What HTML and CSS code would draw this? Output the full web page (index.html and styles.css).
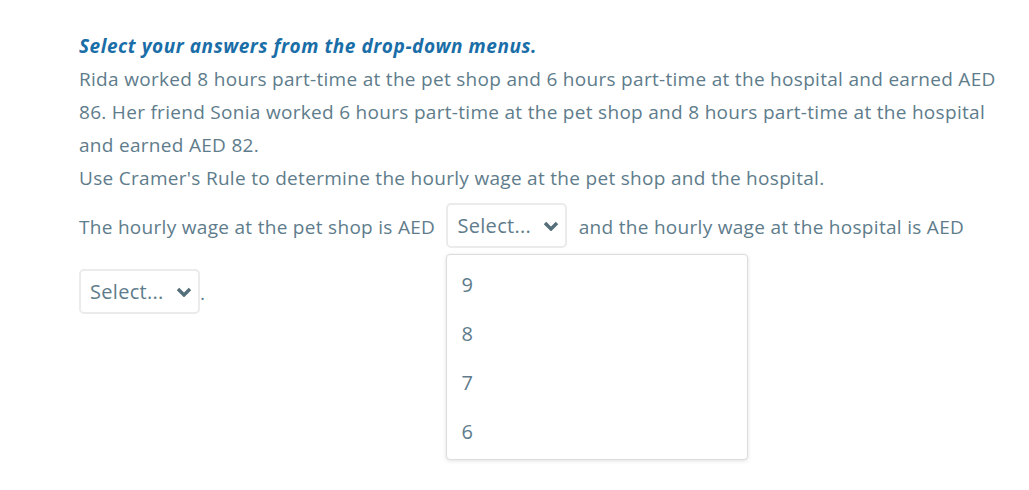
FILE: index.html
```html
<!DOCTYPE html>
<html>
<head>
<meta charset="utf-8">
<link rel="stylesheet" href="styles.css">
</head>
<body>
<div class="content">
  <p class="instr">Select your answers from the drop-down menus.</p>
  <p class="text">Rida worked 8 hours part-time at the pet shop and 6 hours part-time at the hospital and earned AED<br>86. Her friend Sonia worked 6 hours part-time at the pet shop and 8 hours part-time at the hospital<br>and earned AED 82.</p>
  <p class="text">Use Cramer's Rule to determine the hourly wage at the pet shop and the hospital.</p>
  <p class="answer">The hourly wage at the pet shop is AED <span class="dd dd1"><span class="sel"><span class="lbl">Select...</span><svg class="chev" viewBox="0 0 16 10" width="16" height="10"><path d="M2 2 L8 8 L14 2" fill="none" stroke="#546e7a" stroke-width="3.4"/></svg></span><span class="menu"><span class="opt">9</span><span class="opt">8</span><span class="opt">7</span><span class="opt">6</span></span></span> and the hourly wage at the hospital is AED<br><span class="dd"><span class="sel"><span class="lbl">Select...</span><svg class="chev" viewBox="0 0 16 10" width="16" height="10"><path d="M2 2 L8 8 L14 2" fill="none" stroke="#546e7a" stroke-width="3.4"/></svg></span></span>.</p>
</div>
</body>
</html>
```
FILE: styles.css
```css
html, body {
  margin: 0;
  padding: 0;
  background: #ffffff;
}
body {
  min-height: 490px;
}
.content {
  padding: 30px 0 0 79px;
  font-family: "Open Sans", "Liberation Sans", sans-serif;
  font-size: 19px;
  letter-spacing: 0.3px;
  color: #5e7c8b;
  white-space: nowrap;
  min-height: 460px;
}
p {
  margin: 0;
  line-height: 33px;
}
.instr {
  color: #1a6ea8;
  font-weight: 700;
  font-style: italic;
  letter-spacing: 0.55px;
}
.answer {
  line-height: 66px;
  margin-top: -1px;
}
.dd {
  position: relative;
  display: inline-block;
  vertical-align: middle;
  line-height: normal;
  margin-bottom: 6px;
}
.dd1 {
  margin-left: 6px;
  margin-right: 6px;
}
.sel {
  display: flex;
  align-items: center;
  justify-content: space-between;
  box-sizing: border-box;
  width: 121px;
  height: 45px;
  padding: 0 6px 0 9px;
  border: 2px solid #ebebeb;
  border-radius: 5px;
  background: #fff;
}
.lbl {
  font-size: 20px;
  margin-top: -1px;
}
.chev {
  display: block;
  margin-top: 1px;
}
.menu {
  position: absolute;
  top: 51px;
  left: 0;
  width: 302px;
  box-sizing: border-box;
  padding: 5px 0 3px;
  background: #fff;
  border: 1px solid #dcdcdc;
  border-radius: 4px;
  box-shadow: 0 1px 4px rgba(0,0,0,0.12);
  display: flex;
  flex-direction: column;
  z-index: 2;
  letter-spacing: 0;
}
.opt {
  height: 49px;
  line-height: 49px;
  padding-left: 14px;
  font-size: 20px;
}
```
